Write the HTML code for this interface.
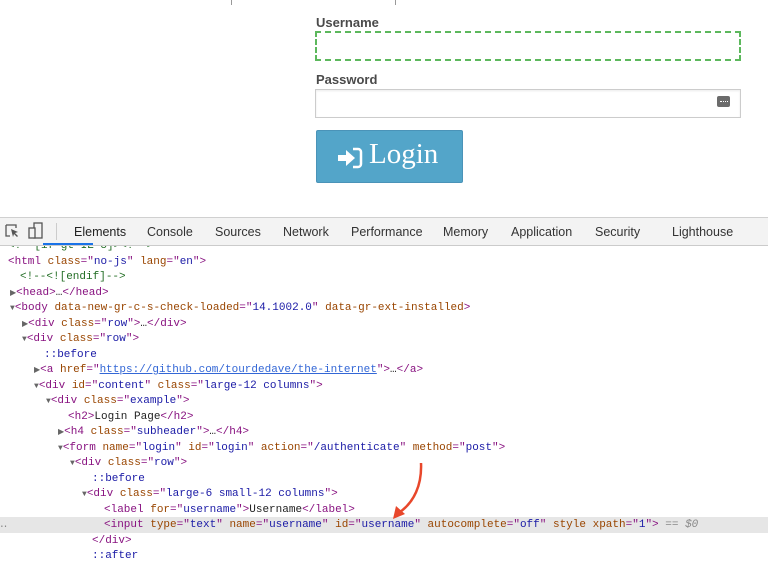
<!DOCTYPE html>
<html><head><meta charset="utf-8"><style>
body{margin:0;width:768px;height:563px;overflow:hidden;background:#fff;position:relative;font-family:"Liberation Sans",sans-serif}
.abs{position:absolute}
.lbl{font-weight:bold;font-size:13px;color:#4a4a4a}
.tb{position:absolute;left:0;top:217px;width:768px;height:27px;background:#f3f3f3;border-top:1px solid #d0d0d0;border-bottom:1px solid #cbcbcb;z-index:5}
.tab{position:absolute;top:7px;font-size:12.5px;color:#333}
.code{position:absolute;left:0;top:239px;width:768px;font-family:"Liberation Mono",monospace;font-size:11px;color:#222}
.ln{position:absolute;height:15.5px;line-height:15.5px;white-space:pre}
.t{color:#881280}.a{color:#994500}.v{color:#1a1aa6}.c{color:#236e25}.p{color:#1a1aa6}
.tri{color:#666;font-size:8px}
</style></head><body>
<div class="abs" style="left:231px;top:0;width:1px;height:5px;background:#999"></div>
<div class="abs" style="left:395px;top:0;width:1px;height:5px;background:#999"></div>
<div class="abs lbl" style="left:316px;top:15px">Username</div>
<div class="abs" style="left:315px;top:31px;border:2px dashed #5cb85c;width:422px;height:26px;background:#fff"></div>
<div class="abs lbl" style="left:316px;top:72px">Password</div>
<div class="abs" style="left:315px;top:89px;width:424px;height:27px;border:1px solid #ccc;box-shadow:inset 0 1px 2px rgba(0,0,0,.08)"></div>
<div class="abs" style="left:717px;top:96px;width:13px;height:11px;background:#6b6b6b;border-radius:2px"></div>
<div class="abs" style="left:720px;top:101px;width:8px;height:1px;border-top:1px dotted #fff"></div>
<div class="abs" style="left:316px;top:130px;width:147px;height:53px;background:#53a5c9;border:1px solid #4a93b8;box-sizing:border-box;border-radius:2px"></div>
<svg class="abs" style="left:336px;top:146px" width="28" height="24" viewBox="0 0 28 24"><path d="M2 9h8V4l9 8-9 8v-5H2z" fill="#fff"/><path d="M17 3h5a3 3 0 0 1 3 3v12a3 3 0 0 1-3 3h-5" fill="none" stroke="#fff" stroke-width="2.5"/></svg>
<div class="abs" style="left:369px;top:138px;font-family:'Liberation Serif',serif;font-size:29px;color:#fff">Login</div>

<div class="tb">
<svg class="abs" style="left:4px;top:5px" width="16" height="16" viewBox="0 0 16 16"><path d="M2 2h10v3M2 2v11h4" fill="none" stroke="#555" stroke-width="1.3"/><path d="M7 6l7 3-3 1 3 3-1 1-3-3-1 3z" fill="#555"/></svg>
<svg class="abs" style="left:28px;top:4px" width="16" height="18" viewBox="0 0 16 18"><rect x="6" y="1" width="8" height="15" fill="none" stroke="#555" stroke-width="1.3"/><rect x="1" y="6" width="6" height="10" fill="#f3f3f3" stroke="#555" stroke-width="1.3"/></svg>
<div class="abs" style="left:56px;top:5px;width:1px;height:17px;background:#ccc"></div>
<div class="tab" style="left:74px;color:#222">Elements</div>
<div class="abs" style="left:43px;top:25px;width:50px;height:2px;background:#1a73e8"></div>
<div class="tab" style="left:147px">Console</div>
<div class="tab" style="left:215px">Sources</div>
<div class="tab" style="left:283px">Network</div>
<div class="tab" style="left:351px">Performance</div>
<div class="tab" style="left:443px">Memory</div>
<div class="tab" style="left:511px">Application</div>
<div class="tab" style="left:595px">Security</div>
<div class="tab" style="left:672px">Lighthouse</div>
</div>

<div class="abs" style="left:0;top:517px;width:768px;height:16px;background:#e6e6e6"></div>
<div class="code">
<div class="ln c" style="left:8px;top:0px">&lt;!--[if gt IE 8]&gt;&lt;!--&gt;</div>
<div class="ln" style="left:8px;top:16px"><span class="t">&lt;html</span> <span class="a">class</span><span class="t">="</span><span class="v">no-js</span><span class="t">"</span> <span class="a">lang</span><span class="t">="</span><span class="v">en</span><span class="t">"&gt;</span></div>
<div class="ln c" style="left:20px;top:31px">&lt;!--&lt;![endif]--&gt;</div>
<div class="ln" style="left:10px;top:47px"><span class="tri">▶</span><span class="t">&lt;head&gt;</span>…<span class="t">&lt;/head&gt;</span></div>
<div class="ln" style="left:10px;top:62px"><span class="tri">▼</span><span class="t">&lt;body</span> <span class="a">data-new-gr-c-s-check-loaded</span><span class="t">="</span><span class="v">14.1002.0</span><span class="t">"</span> <span class="a">data-gr-ext-installed</span><span class="t">&gt;</span></div>
<div class="ln" style="left:22px;top:78px"><span class="tri">▶</span><span class="t">&lt;div</span> <span class="a">class</span><span class="t">="</span><span class="v">row</span><span class="t">"&gt;</span>…<span class="t">&lt;/div&gt;</span></div>
<div class="ln" style="left:22px;top:93px"><span class="tri">▼</span><span class="t">&lt;div</span> <span class="a">class</span><span class="t">="</span><span class="v">row</span><span class="t">"&gt;</span></div>
<div class="ln p" style="left:44px;top:109px">::before</div>
<div class="ln" style="left:34px;top:124px"><span class="tri">▶</span><span class="t">&lt;a</span> <span class="a">href</span><span class="t">="</span><span class="v" style="text-decoration:underline;color:#3367d6">https://github.com/tourdedave/the-internet</span><span class="t">"&gt;</span>…<span class="t">&lt;/a&gt;</span></div>
<div class="ln" style="left:34px;top:140px"><span class="tri">▼</span><span class="t">&lt;div</span> <span class="a">id</span><span class="t">="</span><span class="v">content</span><span class="t">"</span> <span class="a">class</span><span class="t">="</span><span class="v">large-12 columns</span><span class="t">"&gt;</span></div>
<div class="ln" style="left:46px;top:155px"><span class="tri">▼</span><span class="t">&lt;div</span> <span class="a">class</span><span class="t">="</span><span class="v">example</span><span class="t">"&gt;</span></div>
<div class="ln" style="left:68px;top:171px"><span class="t">&lt;h2&gt;</span>Login Page<span class="t">&lt;/h2&gt;</span></div>
<div class="ln" style="left:58px;top:186px"><span class="tri">▶</span><span class="t">&lt;h4</span> <span class="a">class</span><span class="t">="</span><span class="v">subheader</span><span class="t">"&gt;</span>…<span class="t">&lt;/h4&gt;</span></div>
<div class="ln" style="left:58px;top:202px"><span class="tri">▼</span><span class="t">&lt;form</span> <span class="a">name</span><span class="t">="</span><span class="v">login</span><span class="t">"</span> <span class="a">id</span><span class="t">="</span><span class="v">login</span><span class="t">"</span> <span class="a">action</span><span class="t">="</span><span class="v">/authenticate</span><span class="t">"</span> <span class="a">method</span><span class="t">="</span><span class="v">post</span><span class="t">"&gt;</span></div>
<div class="ln" style="left:70px;top:217px"><span class="tri">▼</span><span class="t">&lt;div</span> <span class="a">class</span><span class="t">="</span><span class="v">row</span><span class="t">"&gt;</span></div>
<div class="ln p" style="left:92px;top:233px">::before</div>
<div class="ln" style="left:82px;top:248px"><span class="tri">▼</span><span class="t">&lt;div</span> <span class="a">class</span><span class="t">="</span><span class="v">large-6 small-12 columns</span><span class="t">"&gt;</span></div>
<div class="ln" style="left:104px;top:264px"><span class="t">&lt;label</span> <span class="a">for</span><span class="t">="</span><span class="v">username</span><span class="t">"&gt;</span>Username<span class="t">&lt;/label&gt;</span></div>
<div class="ln" style="left:0px;top:279px;color:#888">‥</div>
<div class="ln" style="left:104px;top:279px"><span class="t">&lt;input</span> <span class="a">type</span><span class="t">="</span><span class="v">text</span><span class="t">"</span> <span class="a">name</span><span class="t">="</span><span class="v">username</span><span class="t">"</span> <span class="a">id</span><span class="t">="</span><span class="v">username</span><span class="t">"</span> <span class="a">autocomplete</span><span class="t">="</span><span class="v">off</span><span class="t">"</span> <span class="a">style</span> <span class="a">xpath</span><span class="t">="</span><span class="v">1</span><span class="t">"&gt;</span> <span style="color:#888">== <i>$0</i></span></div>
<div class="ln" style="left:92px;top:295px"><span class="t">&lt;/div&gt;</span></div>
<div class="ln p" style="left:92px;top:310px">::after</div>
</div>
<svg class="abs" style="left:0;top:0;z-index:6" width="768" height="563"><path d="M421 463 C422 485 414 502 400 512" fill="none" stroke="#e8472b" stroke-width="2.5"/><path d="M393 519 L396 506 L405 514 Z" fill="#e8472b"/></svg>
</body></html>
